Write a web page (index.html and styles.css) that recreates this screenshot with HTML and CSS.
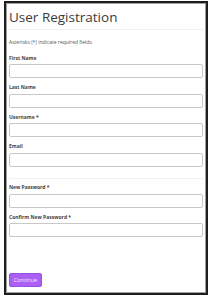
FILE: index.html
```html
<!DOCTYPE html>
<html lang="en">
<head>
    <meta charset="UTF-8">
    <meta name="viewport" content="width=device-width, initial-scale=1.0">
    <title>User Registration</title>
    <link rel="stylesheet" href="styles.css">
</head>
<body>
    <div class="frame">
        <form class="reg-form">
            <h1 class="form-title">User Registration</h1>
            <p class="form-note">Asterisks (*) indicate required fields.</p>

            <!-- 基本信息 -->
            <div class="field">
                <label>First Name</label>
                <input type="text">
            </div>
            <div class="field">
                <label>Last Name</label>
                <input type="text">
            </div>
            <div class="field">
                <label>Username *</label>
                <input type="text">
            </div>
            <div class="field">
                <label>Email</label>
                <input type="text">
            </div>

            <hr class="divider">

            <!-- 密码 -->
            <div class="field">
                <label>New Password *</label>
                <input type="password">
            </div>
            <div class="field">
                <label>Confirm New Password *</label>
                <input type="password">
            </div>

            <div class="actions">
                <button type="button" class="btn-continue">Continue</button>
            </div>
        </form>
    </div>
</body>
</html>
```

FILE: styles.css
```css
* {
    margin: 0;
    padding: 0;
    box-sizing: border-box;
    font-family: 'Open Sans', sans-serif;
}

body {
    background: #fff;
}

.frame {
    margin: 1px 4px 0 4px;
    width: 204px;
    height: 294px;
    border: 2px solid #1e1e1e;
    box-shadow: inset 0 0 0 1px #a0a0a0;
    background: #fff;
}

.reg-form {
    padding: 5px 3px 0 3px;
    display: flex;
    flex-direction: column;
    height: 100%;
}

.form-title {
    font-size: 13.5px;
    font-weight: 400;
    color: #3a3a3a;
    line-height: 18px;
    padding-bottom: 3px;
    border-bottom: 1px solid #f0f0f0;
}

.form-note {
    font-size: 5px;
    line-height: 7px;
    color: #555;
    margin-top: 8.5px;
    margin-bottom: 9px;
}

.field {
    display: flex;
    flex-direction: column;
    margin-bottom: 6px;
}

.field label {
    font-size: 5px;
    line-height: 7px;
    font-weight: 700;
    color: #444;
    margin-bottom: 2.5px;
}

.field input {
    height: 14px;
    border: 1px solid #c8c8c8;
    border-radius: 2px;
    background: #fff;
}

.divider {
    border: none;
    border-top: 1px solid #f2f2f2;
    margin: 5px 0 5.5px;
}

.actions {
    margin-top: auto;
    padding-bottom: 6px;
}

.btn-continue {
    background: #ab60f3;
    color: #f4eaff;
    border: 1px solid #9a4fe6;
    border-radius: 2px;
    font-size: 5.5px;
    line-height: 12px;
    height: 14px;
    width: 33px;
}
```
